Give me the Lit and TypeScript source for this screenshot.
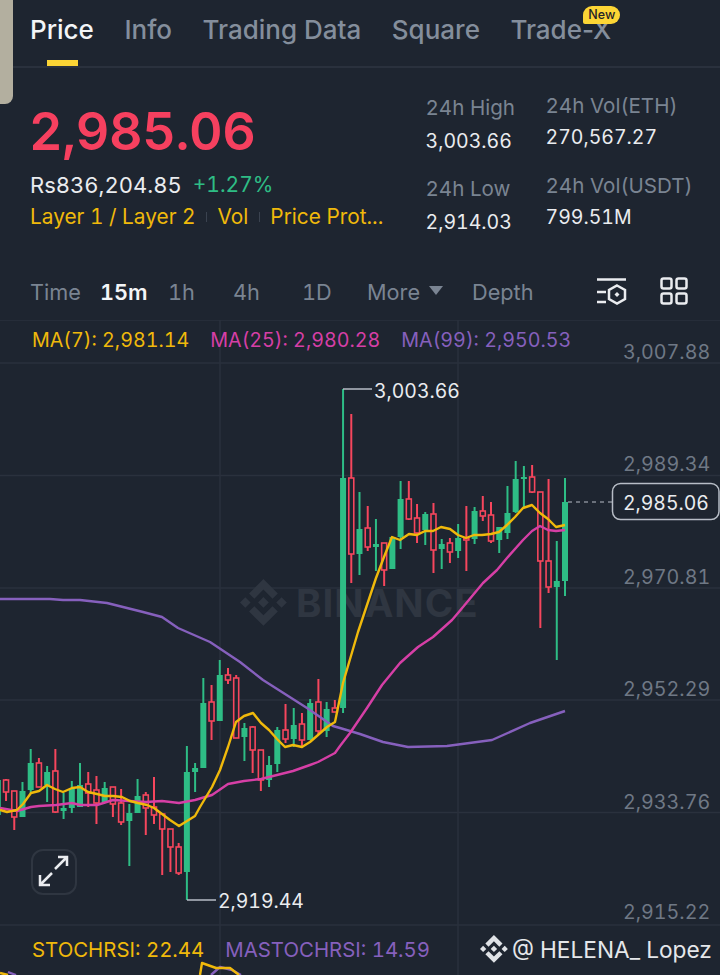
import { LitElement, css, html, svg } from "lit";
import { customElement } from "lit/decorators.js";

// candles, newest first: [green?, wickTop, bodyTop, bodyBottom, wickBottom]
const G = 1;
const R = 0;
const CANDLES: number[][] = [
  [G, 478, 502, 581, 596], [G, 541, 581, 587, 660], [R, 479, 561, 587, 593], [R, 492, 492, 561, 628],
  [R, 465, 477, 492, 493], [G, 466, 477, 479, 508], [G, 461, 479, 512, 513], [G, 486, 513, 533, 539],
  [G, 527, 527, 540, 553], [R, 502, 515, 541, 543], [R, 496, 511, 516, 521], [G, 507, 511, 539, 544],
  [R, 506, 538, 540, 571], [G, 524, 538, 551, 558], [R, 538, 543, 552, 563], [G, 539, 544, 549, 569],
  [R, 503, 514, 550, 573], [G, 512, 514, 530, 545], [R, 504, 518, 533, 543], [R, 481, 499, 519, 520],
  [G, 481, 499, 537, 549], [G, 537, 537, 569, 569], [R, 543, 543, 570, 586], [G, 519, 544, 547, 571],
  [R, 506, 528, 547, 551], [G, 492, 529, 554, 575], [R, 414, 478, 554, 583], [G, 389, 478, 708, 713],
  [R, 700, 708, 712, 712], [G, 702, 709, 731, 737], [R, 679, 702, 731, 735], [G, 699, 703, 740, 740],
  [R, 713, 724, 740, 746], [G, 708, 725, 739, 747], [R, 704, 730, 739, 743], [G, 727, 730, 764, 772],
  [G, 756, 765, 780, 787], [R, 750, 750, 780, 791], [R, 726, 727, 750, 773], [G, 723, 728, 737, 761],
  [R, 675, 678, 738, 738], [R, 668, 675, 680, 684], [G, 660, 675, 721, 721], [R, 685, 702, 721, 740],
  [G, 678, 703, 768, 768], [G, 763, 768, 772, 792], [G, 746, 772, 872, 900], [R, 843, 847, 873, 875],
  [R, 829, 829, 847, 872], [R, 814, 814, 829, 875], [R, 777, 807, 815, 824], [R, 792, 795, 808, 835],
  [G, 779, 796, 813, 813], [G, 804, 813, 821, 866], [R, 789, 803, 822, 825], [R, 787, 787, 804, 817],
  [G, 782, 788, 802, 802], [R, 776, 790, 803, 824], [R, 772, 784, 793, 807], [G, 763, 785, 807, 807],
  [G, 781, 789, 808, 813], [G, 793, 808, 811, 819], [R, 749, 771, 812, 813], [G, 766, 772, 785, 802],
  [R, 758, 763, 787, 787], [G, 749, 763, 790, 793], [G, 782, 791, 817, 817], [R, 791, 791, 817, 830],
  [R, 779, 780, 792, 801], [G, 780, 780, 815, 815],
];

const MA7 =
  "0,810 7,812 17,810 23,804 31,793 39,791 47,785 55,789 63,792 72,788 80,787 88,792 97,794 105,796 113,796 " +
  "122,797 130,801 138,803 147,805 154,808 162,814 170,820 179,826 187,821 195,816 200,807 212,787 " +
  "220,770 228,747 236,722 244,716 253,713 261,723 269,730 277,739 285,747 293,745 302,747 310,742 318,735 " +
  "327,727 335,722 343,683 358,632 376,578 384,557 392,537 400,540 409,534 417,535 425,531 433,531 441,527 " +
  "450,529 458,535 466,538 474,535 482,535 491,534 499,532 507,525 515,517 523,508 532,505 540,513 548,519 " +
  "556,527 565,525";
const MA25 =
  "0,808 17,811 31,807 39,806 56,805 72,803 80,805 97,805 113,800 129,801 146,802 162,801 179,803 195,800 " +
  "212,795 228,784 244,781 261,779 277,775 293,771 310,765 318,762 335,753 340,746 350,733 367,708 382,685 " +
  "400,663 418,647 433,637 452,620 458,613 473,595 483,583 497,570 507,558 523,540 532,531 " +
  "540,526 548,530 556,531 565,530";
const MA99 =
  "0,599 50,599 63,600 80,600 107,603 127,608 143,612 162,617 178,628 210,642 240,662 263,680 307,708 " +
  "333,726 340,728 360,734 383,742 408,747 447,746 492,740 530,723 565,711";

const AXIS: [string, number][] = [
  ["3,007.88", 352], ["2,989.34", 464], ["2,970.81", 577],
  ["2,952.29", 689], ["2,933.76", 802], ["2,915.22", 912],
];

const LOGO = svg`
  <path d="M38.73 53.2l24.59-24.58 24.6 24.6 14.3-14.31L63.32 0 24.43 38.9z" />
  <path d="M0 63.31l14.3-14.31 14.31 14.31-14.31 14.3z" />
  <path d="M38.73 73.41l24.59 24.59 24.6-24.6 14.31 14.29-38.9 38.91-38.91-38.88z" />
  <path d="M98 63.31l14.3-14.31 14.31 14.3-14.31 14.32z" />
  <path d="M77.83 63.3L63.32 48.78 52.59 59.51l-1.24 1.23-2.54 2.54 14.51 14.5 14.51-14.47z" />
`;

@customElement("app-root")
export class AppRoot extends LitElement {
  static styles = css`
    :host {
      display: flex;
      flex-direction: column;
      width: 720px;
      height: 975px;
      overflow: hidden;
      position: relative;
      background: #1e2530;
      color: #eaecef;
      font-family: Inter, "Noto Sans", sans-serif;
      font-variant-numeric: tabular-nums;
    }

    .handle {
      position: absolute;
      left: 0;
      top: 0;
      width: 13px;
      height: 104px;
      background: #b3af9f;
      border-bottom-right-radius: 8px;
    }

    .tabs {
      display: flex;
      gap: 30.5px;
      height: 68px;
      padding-left: 30px;
      box-sizing: border-box;
      border-bottom: 2px solid #2a313d;
      font-size: 26px;
      font-weight: 500;
      font-variant-numeric: normal;
      color: #848e9c;
    }
    .tab {
      position: relative;
      line-height: 60px;
      white-space: nowrap;
    }
    .tab.on {
      color: #f3f5f7;
    }
    .tab.on::after {
      content: "";
      position: absolute;
      left: 17px;
      right: 16px;
      bottom: 0;
      height: 6px;
      background: #fcd535;
    }
    .new {
      position: absolute;
      right: -9px;
      top: 6px;
      padding: 0 5px;
      border-radius: 9px 9px 9px 2px;
      background: #fcd535;
      color: #1e2329;
      font-size: 12.5px;
      font-weight: 500;
      line-height: 18px;
    }

    .stats {
      display: flex;
      height: 185px;
      box-sizing: border-box;
      padding-left: 30px;
    }
    .main {
      width: 395.5px;
      padding-top: 29px;
    }
    .price {
      margin-left: -1px;
      color: #f6405f;
      font-size: 52px;
      font-weight: 600;
      line-height: 70px;
      letter-spacing: -0.4px;
    }
    .fiat {
      display: flex;
      gap: 11px;
      margin-top: 4px;
      font-size: 22px;
      line-height: 28px;
    }
    .up {
      color: #2ebd85;
      font-size: 21px;
    }
    .tags {
      display: flex;
      align-items: center;
      gap: 10.5px;
      margin-top: 4px;
      color: #f0b90b;
      font-size: 20.8px;
      line-height: 28px;
      white-space: nowrap;
    }
    .tags i {
      width: 1px;
      height: 10px;
      background: #3a424f;
    }
    .col {
      width: 120px;
      display: flex;
      flex-direction: column;
      font-size: 19.5px;
      line-height: 28px;
      white-space: nowrap;
    }
    .col span {
      color: #7a8492;
      font-size: 20.6px;
    }
    .col b {
      font-weight: 400;
      color: #eaecef;
    }
    .col.high {
      padding-top: 26px;
      gap: 5px;
    }
    .col.high b {
      margin-bottom: 15px;
    }
    .col.vol {
      padding-top: 24px;
      gap: 3px;
    }
    .col.vol b {
      margin-bottom: 18px;
    }

    .times {
      display: flex;
      align-items: center;
      height: 67px;
      padding: 10px 0 0 30px;
      box-sizing: border-box;
      color: #7a8492;
      font-size: 21.7px;
    }
    .times span {
      white-space: nowrap;
    }
    .times .t1 { width: 70px; }
    .times .t2 { width: 68px; color: #f3f5f7; font-weight: 600; }
    .times .t3 { width: 65px; }
    .times .t4 { width: 69px; }
    .times .t5 { width: 65px; }
    .more {
      display: flex;
      align-items: center;
      gap: 9px;
      width: 105px;
    }
    .more::after {
      content: "";
      border-left: 7px solid transparent;
      border-right: 7px solid transparent;
      border-top: 9px solid #7a8492;
      margin-top: -3px;
    }
    .depth {
      width: 124px;
    }
    .icons {
      display: flex;
      gap: 32px;
    }
    .icons svg {
      display: block;
      fill: none;
      stroke: #eaecef;
      stroke-width: 2.5;
    }

    .chart {
      position: relative;
      flex: 1;
      min-height: 0;
    }
    .chart > svg {
      display: block;
      width: 720px;
      height: 655px;
    }
    .legend {
      position: absolute;
      left: 32px;
      display: flex;
      line-height: 28px;
      white-space: nowrap;
    }
    .legend.ma {
      top: 6px;
      gap: 21px;
      font-size: 19.7px;
    }
    .legend.rsi {
      top: 616px;
      gap: 21px;
      font-size: 20.4px;
    }
    .y { color: #f0b90b; }
    .p { color: #d63fa6; }
    .v { color: #8660bd; }

    .grid { stroke: #2a313d; stroke-width: 1.5; }
    .wm { fill: #2f3641; }
    .wm-text {
      fill: #2f3641;
      font-size: 38.5px;
      font-weight: 700;
      letter-spacing: 1px;
    }
    .line { fill: none; stroke-width: 2.4; stroke-linejoin: round; }
    .axis { fill: #6f7885; font-size: 19.7px; }
    .mark { fill: #eaecef; font-size: 19.4px; }
    .lead { fill: none; stroke: #b7bdc6; stroke-width: 1.5; }
    .tag-box { fill: #1e2530; stroke: #b7bdc6; stroke-width: 1.5; }
    .dash { stroke: #b7bdc6; stroke-width: 1; stroke-dasharray: 4 4; }
    .exp { fill: none; stroke: #2f3641; stroke-width: 2; }
    .arrow { fill: none; stroke: #eaecef; stroke-width: 2.5; }
    .sign { fill: #e5e7ea; font-size: 22.7px; }
    .sign-logo { fill: #dfe2e6; }
  `;

  private candles() {
    return CANDLES.map((c, k) => {
      const x = 565 - 8.22 * k;
      const color = c[0] ? "#2ebd85" : "#f6465d";
      const wick = svg`<line x1=${x} x2=${x} y1=${c[1]} y2=${c[4]} stroke=${color} stroke-width="2" />`;
      return c[0]
        ? svg`${wick}<rect x=${x - 3} y=${c[2]} width="6" height=${Math.max(c[3] - c[2], 2)} fill=${color} />`
        : svg`${wick}<rect x=${x - 2.5} y=${c[2]} width="5" height=${Math.max(c[3] - c[2], 2)} fill="#1e2530" stroke=${color} stroke-width="1.6" />`;
    });
  }

  private chart() {
    return html`<svg viewBox="0 320 720 655">
      ${[320, 363, 475.5, 588, 700, 812.5, 925].map(
        (y) => svg`<line class="grid" x1="0" x2="720" y1=${y} y2=${y} />`
      )}
      ${[220, 458].map((x) => svg`<line class="grid" x1=${x} x2=${x} y1="320" y2="975" />`)}

      <g class="wm" transform="translate(240 579) scale(0.37)">${LOGO}</g>
      <text class="wm-text" x="296" y="617">BINANCE</text>

      ${this.candles()}
      <polyline class="line" stroke="#8660bd" points=${MA99} />
      <polyline class="line" stroke="#d63fa6" points=${MA25} />
      <polyline class="line" stroke="#f0b90b" points=${MA7} />

      <polyline class="lead" points="343,389 372,389" />
      <text class="mark" x="374" y="398">3,003.66</text>
      <polyline class="lead" points="187,900 216,900" />
      <text class="mark" x="218" y="908">2,919.44</text>

      ${AXIS.map(([t, y]) => svg`<text class="axis" x="623" y=${y + 7}>${t}</text>`)}

      <line class="dash" x1="568" x2="612" y1="502" y2="502" />
      <rect class="tag-box" x="612.5" y="483.5" width="106.5" height="36" rx="8" />
      <text class="mark" x="623" y="509.5">2,985.06</text>

      <rect class="exp" x="32" y="850" width="44" height="44" rx="11" />
      <path class="arrow" d="M55 869 L66 858 M58 857 H67 V866 M52 873 L41 884 M40 875 V885 H50" />

      <polyline class="line" stroke="#f0b90b" points="0,973 8,975" />
      <polyline class="line" stroke="#8660bd" points="8,972 16,975" />
      <polyline class="line" stroke="#8660bd" points="211,975 220,967 232,970 241,975" />
      <polyline class="line" stroke="#f0b90b" points="200,975 202,963 216,968 230,968 239,975" />

      <g class="sign-logo" transform="translate(480 935) scale(0.22)">${LOGO}</g>
      <text class="sign" x="512" y="958">@ HELENA_ Lopez</text>
    </svg>`;
  }

  render() {
    return html`
      <div class="tabs">
        <div class="tab on">Price</div>
        <div class="tab">Info</div>
        <div class="tab">Trading Data</div>
        <div class="tab">Square</div>
        <div class="tab">Trade-X<span class="new">New</span></div>
      </div>

      <div class="stats">
        <div class="main">
          <div class="price">2,985.06</div>
          <div class="fiat"><span>Rs836,204.85</span><span class="up">+1.27%</span></div>
          <div class="tags"><span>Layer 1 / Layer 2</span><i></i><span>Vol</span><i></i><span>Price Prot...</span></div>
        </div>
        <div class="col high">
          <span>24h High</span><b>3,003.66</b>
          <span>24h Low</span><b>2,914.03</b>
        </div>
        <div class="col vol">
          <span>24h Vol(ETH)</span><b>270,567.27</b>
          <span>24h Vol(USDT)</span><b>799.51M</b>
        </div>
      </div>

      <div class="times">
        <span class="t1">Time</span>
        <span class="t2">15m</span>
        <span class="t3">1h</span>
        <span class="t4">4h</span>
        <span class="t5">1D</span>
        <span class="more">More</span>
        <span class="depth">Depth</span>
        <div class="icons">
          <svg width="32" height="30" viewBox="0 0 32 30">
            <path d="M1 2.5H30M1 15H10M1 25H10" />
            <path d="M21 8.5l8 4.5v9l-8 4.5-8-4.5v-9z" />
            <path d="M21 15l2.5 2.5L21 20l-2.5-2.5z" fill="#eaecef" stroke="none" />
          </svg>
          <svg width="28" height="28" viewBox="0 0 28 28">
            <rect x="1.5" y="1.5" width="10" height="10" rx="2" />
            <rect x="16.5" y="1.5" width="10" height="10" rx="2" />
            <rect x="1.5" y="16.5" width="10" height="10" rx="2" />
            <rect x="16.5" y="16.5" width="10" height="10" rx="2" />
          </svg>
        </div>
      </div>

      <div class="chart">
        ${this.chart()}
        <div class="legend ma">
          <span class="y">MA(7): 2,981.14</span>
          <span class="p">MA(25): 2,980.28</span>
          <span class="v">MA(99): 2,950.53</span>
        </div>
        <div class="legend rsi">
          <span class="y">STOCHRSI: 22.44</span>
          <span class="v">MASTOCHRSI: 14.59</span>
        </div>
      </div>
      <div class="handle"></div>
    `;
  }
}
